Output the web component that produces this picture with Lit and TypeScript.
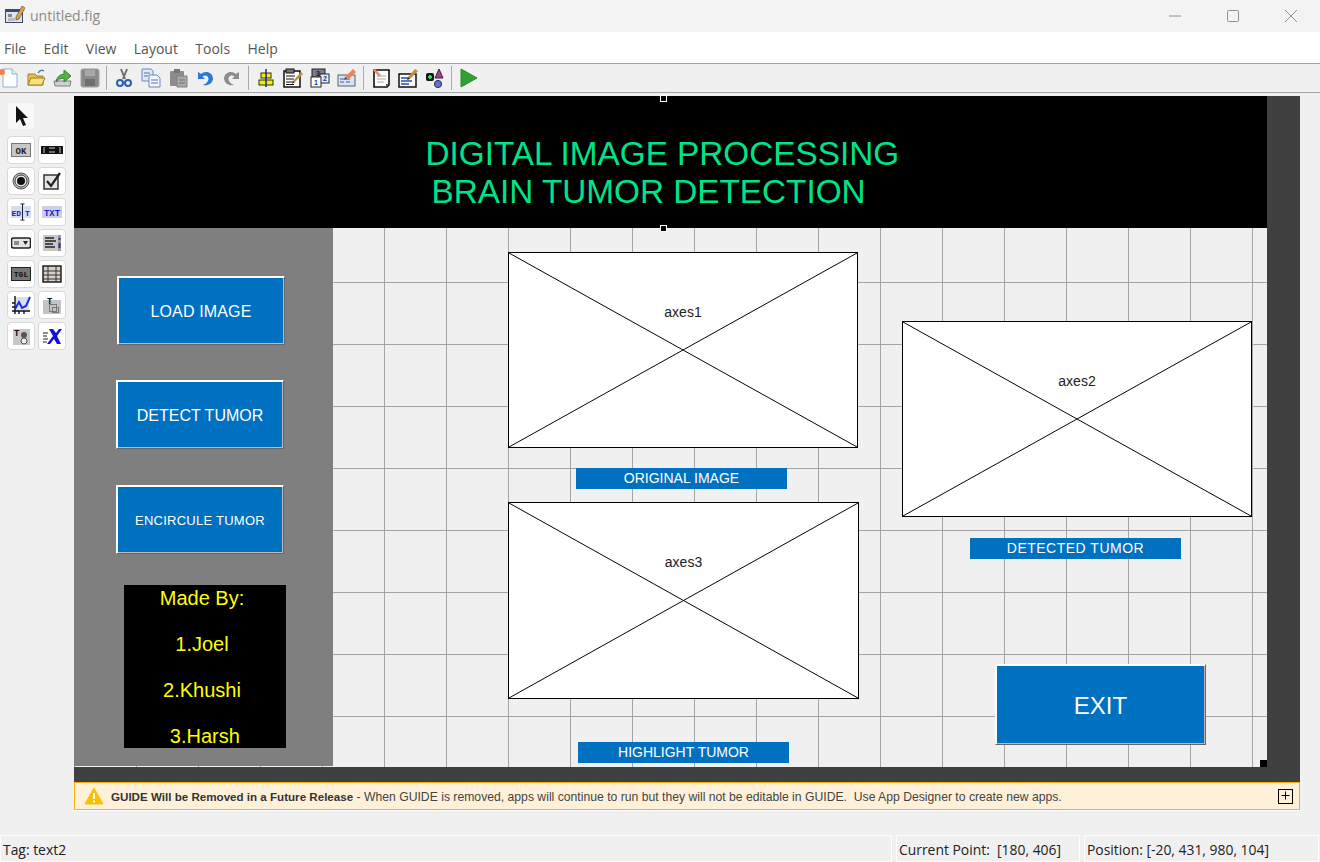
import { LitElement, html, svg, css } from "lit";
import { customElement } from "lit/decorators.js";

const S = (c: unknown, w = 20, h = 20) => html`<svg width=${w} height=${h} viewBox="0 0 ${w} ${h}">${c}</svg>`;

const tb = {
  newf: S(svg`<path d="M4 1h9l5 5v13H4z" fill="#fff" stroke="#8fb0d0"/><path d="M13 1v5h5" fill="#e8f0f8" stroke="#8fb0d0"/><circle cx="3" cy="4" r="3" fill="#f08050"/>`),
  open: S(svg`<path d="M2 6h7l2 2h6v9H2z" fill="#e8c048" stroke="#a08020"/><path d="M2 17l3-7h14l-3 7z" fill="#f8e080" stroke="#a08020"/><path d="M12 5q3-4 6-2" fill="none" stroke="#5080b0" stroke-width="1.5"/>`),
  imp: S(svg`<path d="M1 13h17l-1 5H2z" fill="#d0d0d0" stroke="#808080"/><path d="M3 14q1-7 8-8V2l7 6-7 6v-4q-5 0-8 4z" fill="#58b048" stroke="#38803a"/>`),
  save: S(svg`<rect x="1" y="1" width="18" height="18" rx="2" fill="#8a8a8a" stroke="#a0a0a0"/><rect x="5" y="2" width="10" height="6" fill="#a8a8a8"/><rect x="5" y="11" width="10" height="7" fill="#6e6e6e"/>`),
  cut: S(svg`<path d="M7 1l4 10M13 1L9 11" stroke="#707078" stroke-width="2" fill="none"/><circle cx="6" cy="15" r="3" fill="none" stroke="#2860b0" stroke-width="2"/><circle cx="14" cy="15" r="3" fill="none" stroke="#2860b0" stroke-width="2"/>`),
  copy: S(svg`<path d="M1 1h9l2 2v10H1z" fill="#dfe8f8" stroke="#6888b8"/><path d="M8 7h8l3 3v9H8z" fill="#f4f6fc" stroke="#6888b8"/><path d="M3 5h6M3 8h4M10 12h7M10 15h7" stroke="#5078b0"/>`),
  paste: S(svg`<rect x="2" y="3" width="14" height="15" rx="1" fill="#8c8c8c"/><rect x="6" y="1" width="6" height="4" fill="#777"/><path d="M9 8h10v11H9z" fill="#a8a8a8" stroke="#808080"/><path d="M11 12h6M11 15h6" stroke="#777"/>`),
  undo: S(svg`<path d="M3 4v7h7L7.500 8.500C11 6 15 9 13 13c-1 2-3 3-5 4 5 1 9-1 10-6 0-7-8-9-12-5z" fill="#2a78d8"/>`),
  redo: S(svg`<path d="M17 4v7h-7l2.500-2.500C9 6 5 9 7 13c1 2 3 3 5 4-5 1-9-1-10-6 0-7 8-9 12-5z" fill="#8c8c8c"/>`),
  align: S(svg`<rect x="5" y="5" width="10" height="5" fill="#f0f000" stroke="#303000"/><rect x="3" y="12" width="14" height="5" fill="#f0f000" stroke="#303000"/><path d="M10 1v18" stroke="#2020a0" stroke-width="1.500"/>`),
  menu: S(svg`<rect x="1" y="3" width="16" height="16" fill="#fff" stroke="#111" stroke-width="1.500"/><rect x="3" y="1" width="8" height="4" fill="#777" stroke="#111"/><path d="M3 8h9M3 11h8M3 14h8M3 16.500h8" stroke="#111"/><path d="M10 13l8-9 2 2-8 8z" fill="#c09040"/><path d="M10 13l-1 3 3-2z" fill="#333"/>`),
  tab: S(svg`<rect x="2" y="1" width="13" height="11" fill="#7a7a88" stroke="#222"/><rect x="10" y="6" width="9" height="9" fill="#e8ecf8" stroke="#222"/><rect x="1" y="9" width="10" height="10" fill="#fff" stroke="#222"/><text x="4" y="17" font-size="7" font-weight="700" fill="#2030a0" font-family="Liberation Sans">1</text><text x="13" y="13" font-size="7" font-weight="700" fill="#2030a0" font-family="Liberation Sans">2</text><text x="6" y="8" font-size="7" font-weight="700" fill="#101050" font-family="Liberation Sans">3</text>`),
  editor: S(svg`<rect x="1" y="7" width="17" height="11" fill="#d8e4f4" stroke="#586070"/><path d="M3 11h4M9 11h4M3 14h4M9 14h4" stroke="#3060b0"/><path d="M8 9l8-8 3 3-8 8z" fill="#e08860"/><path d="M8 9l-1 3 3-1z" fill="#333"/>`),
  mfile: S(svg`<path d="M3 2h15v15l-2 2H3z" fill="#fff" stroke="#111" stroke-width="1.600"/><path d="M6 8h9M6 11h9M6 14h7" stroke="#aaa"/><path d="M15 19v-3h3z" fill="#555"/><path d="M2 2l2-1 6 6-2 2z" fill="#e89070"/>`),
  fig: S(svg`<rect x="1" y="6" width="17" height="13" fill="#fff" stroke="#111" stroke-width="1.500"/><path d="M3 10h9M3 13h11M3 16h8" stroke="#2848c0" stroke-width="1.300"/><path d="M10 9l7-8 3 2-8 8z" fill="#c09040"/><path d="M10 9l-1 3 3-1z" fill="#333"/>`),
  obj: S(svg`<rect x="1" y="5" width="8" height="8" rx="2" fill="#101810"/><path d="M3 9h4M5 7v4" stroke="#20e060" stroke-width="2"/><path d="M14 1l4 9h-8z" fill="#a04090" stroke="#402040"/><circle cx="13" cy="16" r="3.600" fill="#6070d0" stroke="#303060"/>`),
  play: S(svg`<path d="M2 1l16 9-16 9z" fill="#30a030" stroke="#2a8a2a"/>`),
};

const pal = [
  S(svg`<rect x="0.500" y="3.500" width="19" height="13" fill="#c8c8c8" stroke="#777"/><text x="10" y="13.500" text-anchor="middle" font-size="9" font-weight="700" fill="#222" font-family="Liberation Mono">OK</text>`),
  S(svg`<rect x="0" y="6" width="22" height="8" fill="#111"/><path d="M3 7v6M19 7v6M8 8h6M8 12h6" stroke="#ccc"/>`, 22, 20),
  S(svg`<circle cx="10" cy="10" r="8" fill="#bbb" stroke="#555"/><circle cx="10" cy="10" r="6" fill="#e8e8e8" stroke="#444"/><circle cx="10" cy="10" r="4" fill="#111"/>`),
  S(svg`<rect x="2" y="4" width="14" height="14" fill="#e4e4e4" stroke="#333" stroke-width="1.500"/><path d="M5 10l4 5 9-13" fill="none" stroke="#222" stroke-width="2.200"/>`),
  S(svg`<rect x="0" y="4" width="20" height="12" fill="#d4def0"/><text x="0.500" y="13.500" font-size="8" font-weight="700" fill="#1820e0" font-family="Liberation Mono">ED</text><text x="14" y="13.500" font-size="8" font-weight="700" fill="#1820e0" font-family="Liberation Mono">T</text><path d="M11.500 2v16M9.500 2h4M9.500 18h4" stroke="#222"/>`),
  S(svg`<rect x="0" y="4" width="20" height="12" fill="#ccd0e4"/><text x="10" y="13.500" text-anchor="middle" font-size="9" font-weight="700" fill="#1820e0" font-family="Liberation Mono">TXT</text>`),
  S(svg`<rect x="0.500" y="5" width="19" height="10" rx="2" fill="#e4e4e4" stroke="#222" stroke-width="1.500"/><path d="M3 9h5M3 11h5" stroke="#333"/><path d="M12 8h5l-2.500 4z" fill="#222"/>`),
  S(svg`<rect x="1" y="2" width="18" height="16" fill="#c8c8c8"/><path d="M3 5h9M3 8h11M3 11h8M3 14h10" stroke="#222" stroke-width="1.400"/><rect x="16" y="2" width="3" height="16" fill="#999"/><path d="M17.500 5v2M17.500 10v5" stroke="#2030c0" stroke-width="2"/>`),
  S(svg`<rect x="0.500" y="3.500" width="19" height="13" fill="#777" stroke="#222"/><text x="10" y="13" text-anchor="middle" font-size="8" font-weight="700" fill="#111" font-family="Liberation Mono">TGL</text>`),
  S(svg`<rect x="1" y="2" width="18" height="16" fill="#d8d0c8" stroke="#111" stroke-width="1.400"/><path d="M1 7h18M1 11h18M1 15h18M6 2v16M14 2v16" stroke="#333"/>`),
  S(svg`<rect x="4" y="2" width="14" height="14" fill="#dde"/><path d="M4 1v18M1 16h18M1 12h3M1 8h3M8 16v3M13 16v3" stroke="#111" stroke-width="1.400"/><path d="M4 14l4-7 3 6 4-2 4-9" fill="none" stroke="#1830e0" stroke-width="2"/>`),
  S(svg`<rect x="1" y="5" width="18" height="14" fill="#c4c4c4"/><text x="5" y="9" font-size="9" font-weight="700" fill="#111" font-family="Liberation Mono">T</text><rect x="7.500" y="9.500" width="7" height="7" fill="none" stroke="#777"/><rect x="10.500" y="12.500" width="6" height="5" fill="none" stroke="#777"/>`),
  S(svg`<rect x="2" y="3" width="17" height="16" fill="#c8c8c8"/><text x="3" y="10" font-size="9" font-weight="700" fill="#111" font-family="Liberation Mono">T</text><circle cx="13" cy="9" r="3" fill="#555"/><circle cx="13" cy="15" r="3" fill="#eee" stroke="#555"/>`),
  S(svg`<path d="M1 7h5M1 10h4M1 13h5M1 16h4" stroke="#222"/><path d="M7 3h4l3 4 3-4h3l-5 7 4 8h-4l-3-5-4 5H5l6-8z" fill="#1010d8"/>`),
];

const Axes = (name: string, w: number, h: number, left: number, top: number) => html`
  <div class="axes" style="left:${left}px;top:${top}px;width:${w}px;height:${h}px">
    <svg class="x" viewBox="0 0 ${w} ${h}" preserveAspectRatio="none"><path d="M0 0L${w} ${h}M${w} 0L0 ${h}" stroke="#000" fill="none"/></svg>
    <span>${name}</span>
  </div>`;

@customElement("app-root")
export class AppRoot extends LitElement {
  static styles = css`
    :host { display: flex; flex-direction: column; width: 1320px; height: 862px; background: #f0f0f0; overflow: hidden; font-family: "Open Sans", "Noto Sans", sans-serif; }
    .title { height: 32px; background: #f3f3f3; display: flex; align-items: center; padding-left: 5px; gap: 5px; color: #8a8a8a; font-size: 14px; flex: none; }
    .title .name { margin-top: -2px; }
    .title > svg { margin-top: -4px; }
    .wc { margin-left: auto; display: flex; align-items: center; }
    .wc svg { display: block; }
    .wc button { width: 58px; height: 32px; border: 0; background: none; padding: 0; display: flex; align-items: center; justify-content: center; }
    .menu { height: 30px; background: #fff; display: flex; align-items: center; padding: 1px 0 0 4px; box-sizing: content-box; gap: 17.4px; font-size: 14px; color: #555; border-bottom: 1px solid #a4a4a4; flex: none; }
    .tools { height: 28px; display: flex; align-items: center; margin-left: -5px; border-bottom: 1px solid #a4a4a4; width: 1325px; flex: none; }
    .slot { width: 27px; height: 28px; display: flex; align-items: center; justify-content: center; flex: none; }
    .sep { width: 1px; height: 24px; background: #a8a8a8; margin: 0 3px; flex: none; }
    .main { height: 686px; margin-top: 3px; display: flex; flex: none; }
    .palette { width: 74px; flex: none; padding: 6px 0 0 7px; box-sizing: border-box; display: grid; grid-template-columns: 28px 28px; grid-template-rows: 31px repeat(7, 28px); gap: 3px 3px; align-content: start; }
    .pb { background: #fff; border: 1px solid #d8d8d8; border-radius: 4px; display: flex; align-items: center; justify-content: center; box-sizing: border-box; overflow: hidden; }
    .pb.ptr { background: #f8f8f8; border-color: #f0f0f0; grid-column: 1 / 3; width: 28px; height: 28px; }
    .stage { width: 1226px; height: 686px; background: #404040; position: relative; flex: none; }
    .fig { position: absolute; left: 0; top: 0; width: 1193px; height: 671px; background-color: #f0f0f0;
      background-image: linear-gradient(90deg, #a4a4a4 1px, transparent 1px), linear-gradient(#a4a4a4 1px, transparent 1px);
      background-size: 62px 62px; background-position: 0 0; }
    .header { position: absolute; left: 0; top: 0; width: 1193px; height: 132px; background: #000; color: #00e38a; font-family: "Liberation Sans", Arial, sans-serif; font-size: 33.3px; line-height: 38px; white-space: pre; padding: 39px 0 0 351.5px; box-sizing: border-box; }
    .header span { display: block; }
    .header .second { padding-left: 6px; }
    .handle { position: absolute; width: 5px; height: 5px; background: #000; border: 1px solid #fff; box-sizing: content-box; }
    .panel { position: absolute; left: 0; top: 132px; width: 259px; height: 538px; background: #7f7f7f; }
    .btn { position: absolute; background: #0070c0; color: #fff; font-family: "Liberation Sans", Arial, sans-serif; display: flex; align-items: center; justify-content: center; box-sizing: border-box; border: 1px solid; border-color: #fff #666 #666 #fff; box-shadow: inset 1px 1px 0 #fff, inset -1px -1px 0 #bbb; font-size: 16px; padding-top: 3px; }
    .btn.spaced { letter-spacing: .15px; }
    .btn.small { font-size: 13px; letter-spacing: .25px; padding-top: 1px; }
    .btn.big { font-size: 24px; padding-top: 3px; }
    .made { position: absolute; left: 50px; top: 489px; width: 162px; height: 163px; background: #000; color: #ffff00; font-family: "Liberation Sans", Arial, sans-serif; font-size: 20px; line-height: 23px; text-align: center; overflow: hidden; padding: 2px 6px 0 0; box-sizing: border-box; white-space: pre; }
    .axes { position: absolute; background: #fff; border: 1px solid #000; box-sizing: border-box; font-family: "Liberation Sans", Arial, sans-serif; font-size: 14px; color: #222; }
    .axes .x { position: absolute; inset: 0; width: 100%; height: 100%; display: block; }
    .axes span { position: absolute; left: 0; right: 0; top: 51px; text-align: center; }
    .lbl { position: absolute; width: 211px; height: 21px; background: #0070c0; color: #fff; font-family: "Liberation Sans", Arial, sans-serif; font-size: 14px; line-height: 21px; text-align: center; }
    .lbl.wide { letter-spacing: .5px; }
    .corner { position: absolute; left: 1186px; top: 664px; width: 7px; height: 7px; background: #000; }
    .warn { margin-left: 74px; width: 1226px; height: 28px; background: #fff1d9; border: 1px solid #f5b010; box-sizing: border-box; display: flex; align-items: center; padding: 1px 0 0 9px; gap: 7px; font-family: "Liberation Sans", Arial, sans-serif; font-size: 12.2px; color: #444; flex: none; white-space: pre; box-shadow: 0 1px 0 #fff; }
    .warn b { color: #333; font-size: 11.6px; }
    .warn svg { margin-top: -1px; }
    .plus { margin: -1px 6px 0 auto; width: 15px; height: 15px; border: 1px solid #000; box-sizing: border-box; display: flex; }
    .status { height: 27px; margin-top: 25px; display: flex; gap: 4px; font-size: 13.9px; color: #222; flex: none; }
    .cell { border: 1px solid #fff; box-sizing: border-box; display: flex; align-items: center; padding: 2px 0 0 2px; white-space: pre; }
    .cell.c1 { width: 892px; }
    .cell.c2 { width: 184px; }
    .cell.c3 { width: 235px; }
  `;

  render() {
    const T = (i: unknown) => html`<span class="slot">${i}</span>`;
    const sep = html`<span class="sep"></span>`;
    return html`
      <div class="title">
        <svg width="20" height="20" viewBox="0 0 20 20"><rect x="0.500" y="5.500" width="17" height="13" fill="#dfe4f0" stroke="#3c4a70"/><rect x="0" y="5" width="17" height="3" fill="#3c4a70"/><rect x="3" y="10" width="4" height="3" fill="#888"/><rect x="3" y="14" width="7" height="3" fill="#bbb"/><path d="M11 13l6-11 3 2-6 11-3 1z" fill="#d8a050" stroke="#604020" stroke-width=".6"/></svg>
        <span class="name">untitled.fig</span>
        <div class="wc">
          <button aria-label="Minimize"><svg width="14" height="2"><path d="M1 1h12" stroke="#909090"/></svg></button>
          <button aria-label="Maximize"><svg width="14" height="14"><rect x="1.500" y="1.500" width="11" height="11" rx="1" fill="none" stroke="#909090"/></svg></button>
          <button aria-label="Close"><svg width="14" height="14"><path d="M1 1l12 12M13 1L1 13" stroke="#909090"/></svg></button>
        </div>
      </div>
      <div class="menu"><span>File</span><span>Edit</span><span>View</span><span>Layout</span><span>Tools</span><span>Help</span></div>
      <div class="tools">
        ${T(tb.newf)}${T(tb.open)}${T(tb.imp)}${T(tb.save)}${sep}
        ${T(tb.cut)}${T(tb.copy)}${T(tb.paste)}${T(tb.undo)}${T(tb.redo)}${sep}
        ${T(tb.align)}${T(tb.menu)}${T(tb.tab)}${T(tb.editor)}${sep}
        ${T(tb.mfile)}${T(tb.fig)}${T(tb.obj)}${sep}${T(tb.play)}
      </div>
      <div class="main">
        <div class="palette">
          <div class="pb ptr"><svg width="20" height="22" viewBox="0 0 20 22"><path d="M5 1v17l4-4 3 7 3-1-3-7h5z" fill="#111"/></svg></div>
          ${pal.map((i) => html`<div class="pb">${i}</div>`)}
        </div>
        <div class="stage">
          <div class="fig">
            <div class="panel"></div>
            <div class="header"><span>DIGITAL IMAGE PROCESSING</span><span class="second">BRAIN TUMOR DETECTION</span></div>
            <div class="handle" style="left:586px;top:-1px"></div>
            <div class="handle" style="left:586px;top:129px"></div>
            <div class="btn spaced" style="left:43px;top:180px;width:168px;height:69px">LOAD IMAGE</div>
            <div class="btn" style="left:42px;top:284px;width:168px;height:69px">DETECT TUMOR</div>
            <div class="btn small" style="left:42px;top:389px;width:168px;height:69px">ENCIRCULE TUMOR</div>
            <div class="made">Made By:

1.Joel

2.Khushi

 3.Harsh</div>
            ${Axes("axes1", 350, 196, 434, 156)}
            ${Axes("axes2", 350, 196, 828, 225)}
            ${Axes("axes3", 351, 197, 434, 406)}
            <div class="lbl" style="left:502px;top:372px">ORIGINAL IMAGE</div>
            <div class="lbl wide" style="left:896px;top:442px">DETECTED TUMOR</div>
            <div class="lbl" style="left:504px;top:646px">HIGHLIGHT TUMOR</div>
            <div class="btn big" style="left:921px;top:568px;width:211px;height:81px">EXIT</div>
            <div class="corner"></div>
          </div>
        </div>
      </div>
      <div class="warn">
        <svg width="20" height="18" viewBox="0 0 20 18"><path d="M10 1l9 16H1z" fill="#f8c000" stroke="#f8c000" stroke-linejoin="round"/><path d="M10 6v6M10 13.500v2" stroke="#fff" stroke-width="2"/></svg>
        <span><b>GUIDE Will be Removed in a Future Release</b> - When GUIDE is removed, apps will continue to run but they will not be editable in GUIDE.  Use App Designer to create new apps.</span>
        <span class="plus"><svg width="13" height="13"><path d="M2.500 6.500h8M6.500 2.500v8" stroke="#000"/></svg></span>
      </div>
      <div class="status">
        <div class="cell c1">Tag: text2</div>
        <div class="cell c2">Current Point:  [180, 406]</div>
        <div class="cell c3">Position: [-20, 431, 980, 104]</div>
      </div>`;
  }
}
